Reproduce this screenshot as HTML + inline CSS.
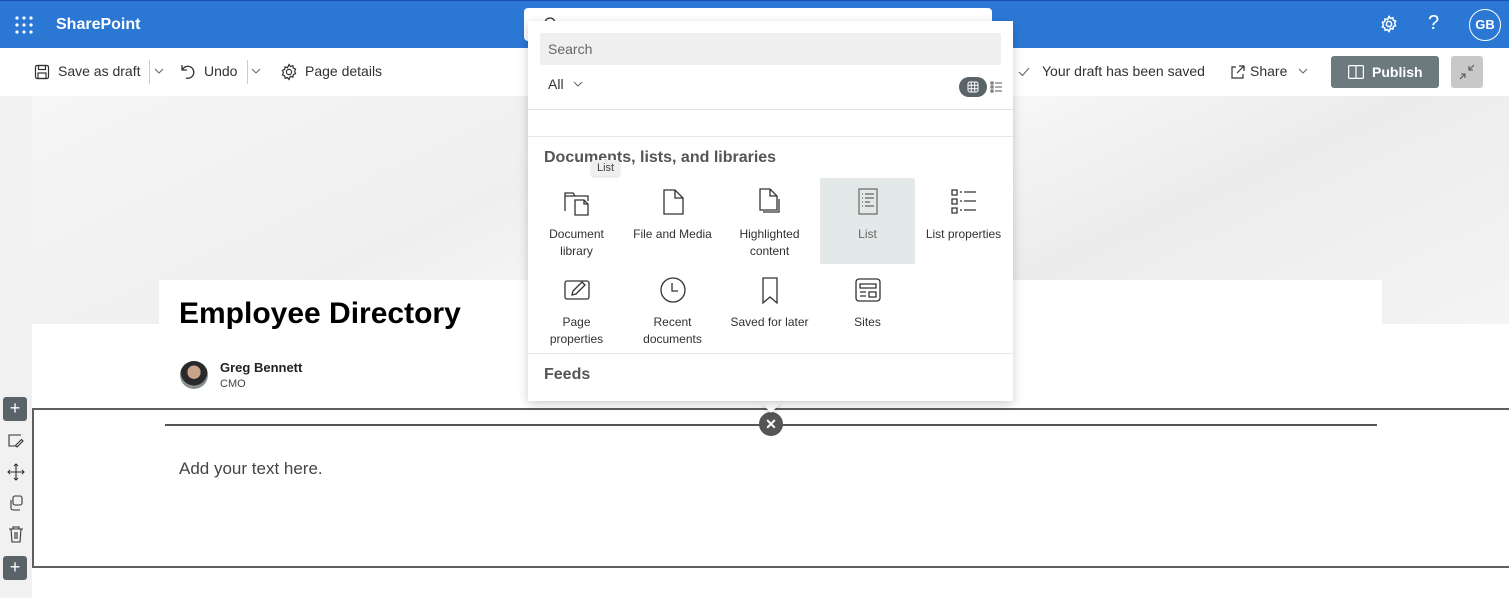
<!DOCTYPE html><html><head><style>
*{box-sizing:border-box;margin:0;padding:0}
body{width:1509px;height:598px;overflow:hidden;font-family:"Liberation Sans",sans-serif;background:#fff;position:relative;color:#323130}
.a{position:absolute}
.top{left:0;top:0;width:1509px;height:48px;background:#2b78d4;border-top:1px solid #1a4fb0}
.tb{left:0;top:48px;width:1509px;height:48px;background:#fff;font-size:14px;color:#323130}
.tb span{position:absolute;top:15px}
.hero{left:32px;top:96px;width:1477px;height:228px;background:linear-gradient(155deg,#f6f6f6 0%,#efefef 35%,#f7f7f7 50%,#ececec 70%,#f4f4f4 100%)}
.strip{left:0;top:96px;width:32px;height:502px;background:#f1f1f1}
.pop{left:528px;top:21px;width:485px;height:380px;background:#fff;box-shadow:0 3px 10px rgba(0,0,0,.2)}
.it{position:absolute;width:95px;text-align:center;font-size:12px;color:#323130;line-height:17px}
.it svg{display:block;margin:0 auto 9px}
.lb{position:absolute;left:0;width:24px;height:24px;border-radius:3px;background:#5a6468;color:#fff;text-align:center;font-size:18px;line-height:23px;left:3px}
.chev{position:absolute;top:20px}
</style></head><body>
<div class="a top">
<svg class="a" style="left:15px;top:15px" width="18" height="18" fill="#fff"><g><circle cx="2" cy="2" r="1.6"/><circle cx="9" cy="2" r="1.6"/><circle cx="16" cy="2" r="1.6"/><circle cx="2" cy="9" r="1.6"/><circle cx="9" cy="9" r="1.6"/><circle cx="16" cy="9" r="1.6"/><circle cx="2" cy="16" r="1.6"/><circle cx="9" cy="16" r="1.6"/><circle cx="16" cy="16" r="1.6"/></g></svg>
<div class="a" style="left:56px;top:15px;color:#fff;font-size:16px;font-weight:bold">SharePoint</div>
<div class="a" style="left:524px;top:7px;width:468px;height:33px;background:#fff;border-radius:4px"></div>
<svg class="a" style="left:542px;top:16px" width="14" height="14" fill="none" stroke="#333" stroke-width="1.3"><circle cx="8" cy="6" r="5"/></svg>
<svg class="a" style="left:1380px;top:14px" width="18" height="18" viewBox="0 0 18 18" fill="none" stroke="#fff" stroke-width="1.5"><circle cx="9" cy="9" r="2.6"/><path d="M9 1.5l1.5 2 2.4-.8.4 2.5 2.3.9-1 2.3 1 2.3-2.3.9-.4 2.5-2.4-.8L9 16.5l-1.5-2-2.4.8-.4-2.5-2.3-.9 1-2.3-1-2.3 2.3-.9.4-2.5 2.4.8z"/></svg>
<div class="a" style="left:1428px;top:11px;color:#fff;font-size:20px">?</div>
<div class="a" style="left:1469px;top:8px;width:32px;height:32px;border:1.5px solid #fff;border-radius:50%;color:#fff;font-size:13px;font-weight:bold;text-align:center;line-height:29px">GB</div>
</div>
<div class="a tb">
<svg class="a" style="left:34px;top:16px" width="16" height="16" viewBox="0 0 16 16" fill="none" stroke="#323130" stroke-width="1.2"><rect x="1.5" y="1.5" width="13" height="13" rx="1.5"/><rect x="4.5" y="1.5" width="7" height="4"/><rect x="4" y="9" width="8" height="5.5"/></svg>
<span style="left:58px">Save as draft</span>
<div class="a" style="left:149px;top:12px;width:1px;height:24px;background:#ccc"></div>
<svg class="chev" style="left:154px" width="10" height="6" fill="none" stroke="#666"><path d="M1 1l4 4 4-4"/></svg>
<svg class="a" style="left:179px;top:14px" width="18" height="18" viewBox="0 0 18 18" fill="none" stroke="#323130" stroke-width="1.3"><path d="M3 3v5h5M3.5 7.5A6 6 0 1 1 7 16"/></svg>
<span style="left:204px">Undo</span>
<div class="a" style="left:247px;top:12px;width:1px;height:24px;background:#ccc"></div>
<svg class="chev" style="left:251px" width="10" height="6" fill="none" stroke="#666"><path d="M1 1l4 4 4-4"/></svg>
<svg class="a" style="left:280px;top:15px" width="18" height="18" viewBox="0 0 18 18" fill="none" stroke="#323130" stroke-width="1.2"><circle cx="9" cy="9" r="2.6"/><path d="M9 1.5l1.5 2 2.4-.8.4 2.5 2.3.9-1 2.3 1 2.3-2.3.9-.4 2.5-2.4-.8L9 16.5l-1.5-2-2.4.8-.4-2.5-2.3-.9 1-2.3-1-2.3 2.3-.9.4-2.5 2.4.8z"/></svg>
<span style="left:305px">Page details</span>
<svg class="a" style="left:1018px;top:19px" width="12" height="10" fill="none" stroke="#666" stroke-width="1.1"><path d="M1 5l3.5 3.5L11 1"/></svg>
<span style="left:1042px">Your draft has been saved</span>
<svg class="a" style="left:1230px;top:16px" width="16" height="16" viewBox="0 0 16 16" fill="none" stroke="#323130" stroke-width="1.2"><path d="M6 3H2v11h11v-4M9 2h5v5M14 2L7 9"/></svg>
<span style="left:1250px">Share</span>
<svg class="chev" style="left:1298px" width="10" height="6" fill="none" stroke="#666"><path d="M1 1l4 4 4-4"/></svg>
<div class="a" style="left:1331px;top:8px;width:108px;height:32px;background:#6c7a7e;border-radius:3px;color:#fff;font-weight:bold;font-size:14px;line-height:32px;padding-left:41px">Publish</div>
<svg class="a" style="left:1348px;top:17px" width="16" height="14" fill="none" stroke="#fff" stroke-width="1.2"><rect x=".6" y=".6" width="14.8" height="12.8" rx="1"/><path d="M8 .6v12.8"/></svg>
<div class="a" style="left:1451px;top:8px;width:32px;height:32px;background:#c8c8c8;border-radius:3px"></div>
<svg class="a" style="left:1459px;top:16px" width="16" height="16" fill="none" stroke="#555" stroke-width="1.1"><path d="M15 1l-5 5M10 2v4h4M1 15l5-5M2 10h4v4"/></svg>
</div>
<div class="a strip"></div>
<div class="a hero"></div>
<div class="a" style="left:159px;top:280px;width:1223px;height:44px;background:#fff"></div>
<div class="a" style="left:179px;top:297px;font-size:30px;font-weight:bold;color:#000">Employee Directory</div>
<div class="a" style="left:180px;top:361px;width:28px;height:28px;border-radius:50%;background:radial-gradient(circle at 50% 40%,#c9a48a 0 30%,#2a2a2a 31% 60%,#8a9090 61%)"></div>
<div class="a" style="left:220px;top:360px;font-size:13px;font-weight:bold;color:#222">Greg Bennett</div>
<div class="a" style="left:220px;top:378px;font-size:11px;color:#444">CMO</div>
<div class="a" style="left:32px;top:408px;width:1477px;height:160px;border:2px solid #5e5e5e;border-right:none"></div>
<div class="a" style="left:165px;top:424px;width:1212px;height:2px;background:#555"></div>
<div class="a" style="left:179px;top:459px;font-size:17px;color:#444">Add your text here.</div>
<div class="a" style="left:759px;top:412px;width:24px;height:24px;border-radius:50%;background:#555;color:#fff;text-align:center;font-size:14px;line-height:24px;font-weight:bold">✕</div>
<div class="lb a" style="top:397px">+</div>
<div class="lb a" style="top:556px">+</div>
<svg class="a" style="left:7px;top:432px" width="18" height="18" fill="none" stroke="#333" stroke-width="1.1"><path d="M14 3H2v11h7M10 15l6-6-1.5-1.5-6 6z"/></svg>
<svg class="a" style="left:7px;top:463px" width="18" height="18" fill="none" stroke="#333" stroke-width="1.1"><path d="M9 1v16M1 9h16M7 3l2-2 2 2M7 15l2 2 2-2M3 7l-2 2 2 2M15 7l2 2-2 2"/></svg>
<svg class="a" style="left:8px;top:495px" width="16" height="16" fill="none" stroke="#333" stroke-width="1.1"><rect x="5" y="1" width="9" height="9" rx="2"/><path d="M3 5v8a2 2 0 0 0 2 2h7"/></svg>
<svg class="a" style="left:8px;top:526px" width="16" height="18" fill="none" stroke="#333" stroke-width="1.1"><path d="M1 3h14M5 3V1h6v2M3 3l1 13h8l1-13M7 6v7M9 6v7"/></svg>
<div class="a" style="left:764px;top:396px;width:14px;height:14px;background:#fff;transform:rotate(45deg);box-shadow:2px 2px 3px rgba(0,0,0,.12)"></div>
<div class="a pop">
<div class="a" style="left:12px;top:12px;width:461px;height:32px;background:#efefef;border-radius:2px;font-size:14px;color:#666;line-height:32px;padding-left:8px">Search</div>
<div class="a" style="left:20px;top:55px;font-size:14px">All</div>
<svg class="a" style="left:45px;top:60px" width="10" height="6" fill="none" stroke="#666"><path d="M1 1l4 4 4-4"/></svg>
<div class="a" style="left:431px;top:56px;width:28px;height:20px;border-radius:10px;background:#5a6468"></div>
<svg class="a" style="left:439px;top:60px" width="12" height="12" fill="none" stroke="#fff" stroke-width="1"><rect x="1" y="1" width="10" height="10" rx="2"/><path d="M4.3 1v10M7.7 1v10M1 4.3h10M1 7.7h10"/></svg>
<svg class="a" style="left:462px;top:60px" width="13" height="12" fill="none" stroke="#555" stroke-width="1"><path d="M1 1h2v2H1zM1 5h2v2H1zM1 9h2v2H1zM5 2h7M5 6h7M5 10h7"/></svg>
<div class="a" style="left:0;top:88px;width:485px;height:1px;background:#e1e1e1"></div>
<div class="a" style="left:0;top:115px;width:485px;height:1px;background:#e8e8e8"></div>
<div class="a" style="left:16px;top:128px;font-size:16px;font-weight:bold;color:#555">Documents, lists, and libraries</div>
<div class="a" style="left:292px;top:157px;width:95px;height:86px;background:#e3e8e8;border-radius:2px"></div>
<div class="it" style="left:1px;top:166px"><svg width="30" height="30" fill="none" stroke="#333" stroke-width="1.3"><path d="M3 24V6h8l2 3h13v5M3 9h10"/><path d="M13 13h9l4 4v11H13zM22 13v4h4"/></svg>Document<br>library</div>
<div class="it" style="left:97px;top:166px"><svg width="30" height="30" fill="none" stroke="#333" stroke-width="1.3"><path d="M6 3h11l8 8v16H6z"/><path d="M17 3v8h8"/></svg>File and Media</div>
<div class="it" style="left:194px;top:166px"><svg width="30" height="30" fill="none" stroke="#333" stroke-width="1.3"><path d="M5 2h10l7 7v14H5z"/><path d="M15 2v7h7M24 12v13H8"/></svg>Highlighted<br>content</div>
<div class="it" style="left:292px;top:166px;color:#666"><svg width="30" height="30" fill="none" stroke="#666" stroke-width="1.2"><rect x="6" y="2" width="18" height="25"/><path d="M9 7h1M12 7h9M9 11h1M12 11h9M9 15h1M12 15h5M9 19h1M12 19h9"/></svg>List</div>
<div class="it" style="left:388px;top:166px"><svg width="30" height="30" fill="none" stroke="#333" stroke-width="1.3"><path d="M3 3h5v5H3zM3 12h5v5H3zM3 21h5v5H3zM11 5h2M15 5h12M11 14h2M15 14h12M11 23h2M15 23h12"/></svg>List properties</div>
<div class="a" style="left:63px;top:139px;background:#efefef;border-radius:3px;font-size:11px;padding:2px 6px;color:#444;box-shadow:0 1px 2px rgba(0,0,0,.15)">List</div>
<div class="it" style="left:1px;top:254px"><svg width="30" height="30" fill="none" stroke="#333" stroke-width="1.3"><rect x="3" y="6" width="24" height="18" rx="2"/><path d="M10 20l1-4 9-9 3 3-9 9z"/></svg>Page<br>properties</div>
<div class="it" style="left:97px;top:254px"><svg width="30" height="30" fill="none" stroke="#333" stroke-width="1.3"><circle cx="15" cy="15" r="12"/><path d="M14 8v8h6"/></svg>Recent<br>documents</div>
<div class="it" style="left:194px;top:254px"><svg width="30" height="30" fill="none" stroke="#333" stroke-width="1.3"><path d="M8 3h14v25l-7-6-7 6z"/></svg>Saved for later</div>
<div class="it" style="left:292px;top:254px"><svg width="30" height="30" fill="none" stroke="#333" stroke-width="1.3"><rect x="3" y="4" width="24" height="22" rx="3"/><path d="M7 9h16v4H7zM7 17h6M7 21h6M16 17h7v5h-7z"/></svg>Sites</div>
<div class="a" style="left:0;top:332px;width:485px;height:1px;background:#e8e8e8"></div>
<div class="a" style="left:16px;top:345px;font-size:16px;font-weight:bold;color:#555">Feeds</div>
</div>
</body></html>
